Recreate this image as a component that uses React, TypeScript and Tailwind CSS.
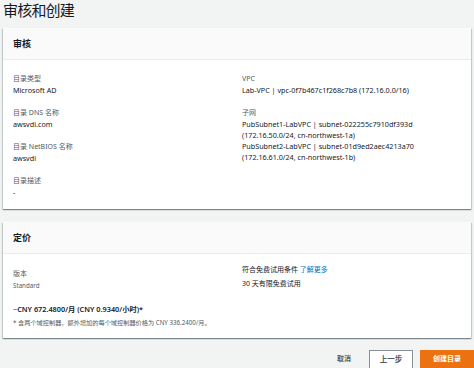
import React from "react";

const Label = ({ children }: { children: React.ReactNode }) => (
  <div className="text-[7px] leading-[11px] text-[#545b64]">{children}</div>
);
const Value = ({ children }: { children: React.ReactNode }) => (
  <div className="mt-[1px] text-[7.2px] leading-[11px] text-[#16191f]">{children}</div>
);

const cardShadow =
  "shadow-[0_1px_1px_0_rgba(0,28,36,0.3),1px_1px_1px_0_rgba(0,28,36,0.15),-1px_1px_1px_0_rgba(0,28,36,0.15)]";

export default function App() {
  return (
    <div className="w-[474px] h-[368px] overflow-hidden bg-[#f2f3f3] pl-[3px] font-['Noto_Sans','Noto_Sans_CJK_SC',sans-serif]">
      <h1 className="h-[28px] text-[15px] leading-[20px] tracking-[-0.8px] text-[#16191f]">审核和创建</h1>

      <div className={`mr-[3px] bg-white ${cardShadow}`}>
        <div className="flex h-[32px] items-center border-b border-[#eaeded] bg-[#fafafa] px-[10px] text-[9px] font-bold text-[#16191f]">
          审核
        </div>
        <div className="grid grid-cols-2 gap-x-[10px] px-[10px] pt-[13px] pb-[11px]">
          <div className="flex flex-col gap-[11px]">
            <div>
              <Label>目录类型</Label>
              <Value>Microsoft AD</Value>
            </div>
            <div>
              <Label>目录 DNS 名称</Label>
              <Value>awsvdi.com</Value>
            </div>
            <div>
              <Label>目录 NetBIOS 名称</Label>
              <Value>awsvdi</Value>
            </div>
            <div>
              <Label>目录描述</Label>
              <Value>-</Value>
            </div>
          </div>
          <div className="flex flex-col gap-[11px]">
            <div>
              <Label>VPC</Label>
              <Value>Lab-VPC | vpc-0f7b467c1f268c7b8 (172.16.0.0/16)</Value>
            </div>
            <div>
              <Label>子网</Label>
              <Value>
                <div>PubSubnet1-LabVPC | subnet-022255c7910df393d</div>
                <div>(172.16.50.0/24, cn-northwest-1a)</div>
                <div>PubSubnet2-LabVPC | subnet-01d9ed2aec4213a70</div>
                <div>(172.16.61.0/24, cn-northwest-1b)</div>
              </Value>
            </div>
          </div>
        </div>
      </div>

      <div className={`mt-[13px] mr-[3px] bg-white ${cardShadow}`}>
        <div className="flex h-[32px] items-center border-b border-[#eaeded] bg-[#fafafa] px-[10px] text-[9px] font-bold text-[#16191f]">
          定价
        </div>
        <div className="grid grid-cols-2 gap-x-[10px] px-[10px] pb-[11px]">
          <div className="pt-[14px]">
            <Label>版本</Label>
            <div className="mt-[1px] text-[6.2px] leading-[11px] text-[#545b64]">Standard</div>
            <div className="mt-[13px] text-[7.3px] font-semibold leading-[11px] text-[#16191f]">
              ~CNY 672.4800/月 (CNY 0.9340/小时)*
            </div>
            <div className="mt-[3px] text-[6.2px] leading-[9px] text-[#545b64]">
              * 含两个域控制器，额外增加的每个域控制器价格为 CNY 336.2400/月。
            </div>
          </div>
          <div className="pt-[10px]">
            <div className="text-[7px] leading-[11px] text-[#16191f]">
              符合免费试用条件 <span className="text-[#0073bb]">了解更多</span>
            </div>
            <div className="mt-[3px] text-[7px] leading-[11px] text-[#16191f]">30 天有限免费试用</div>
          </div>
        </div>
      </div>

      <div className="mt-[12px] flex items-start justify-end">
        <span className="mt-[3px] text-[7px] font-bold leading-[12px] text-[#545b64]">取消</span>
        <button className="ml-[18px] flex h-[19px] w-[44px] items-center justify-center border border-[#879196] bg-white text-[7.5px] font-bold text-[#545b64]">
          上一步
        </button>
        <button className="ml-[7px] flex h-[19px] w-[54px] items-center justify-center border border-[#ec7211] bg-[#ec7211] text-[7px] font-bold text-white">
          创建目录
        </button>
      </div>
    </div>
  );
}
